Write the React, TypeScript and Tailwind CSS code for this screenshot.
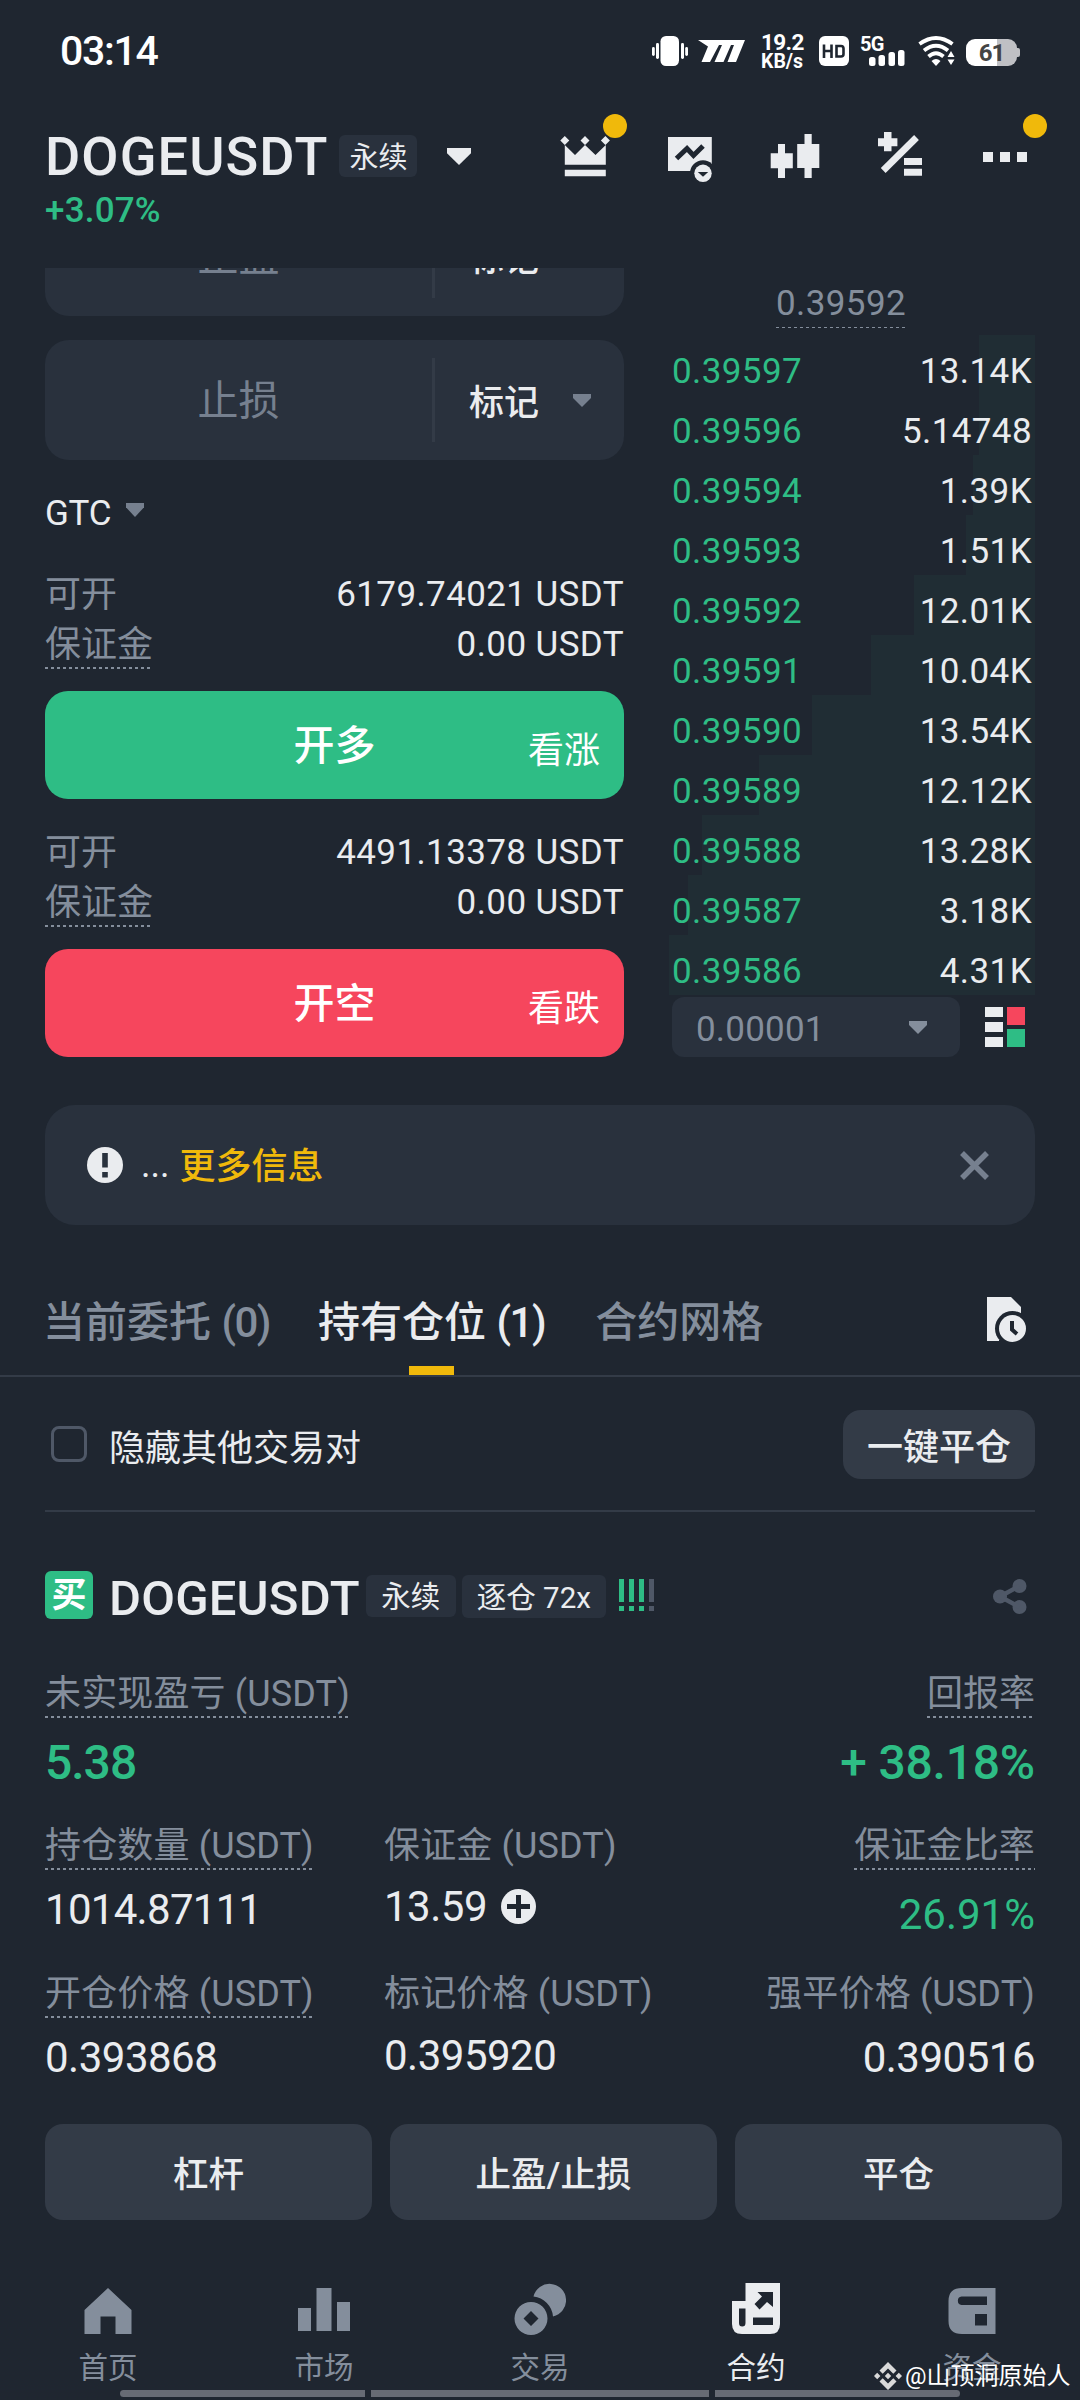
import React from "react";

interface Bid {
  price: string;
  amount: string;
  depth: number;
}

const bids: Bid[] = [
  { price: "0.39597", amount: "13.14K", depth: 56 },
  { price: "0.39596", amount: "5.14748", depth: 56 },
  { price: "0.39594", amount: "1.39K", depth: 62 },
  { price: "0.39593", amount: "1.51K", depth: 69 },
  { price: "0.39592", amount: "12.01K", depth: 121 },
  { price: "0.39591", amount: "10.04K", depth: 164 },
  { price: "0.39590", amount: "13.54K", depth: 223 },
  { price: "0.39589", amount: "12.12K", depth: 276 },
  { price: "0.39588", amount: "13.28K", depth: 333 },
  { price: "0.39587", amount: "3.18K", depth: 347 },
  { price: "0.39586", amount: "4.31K", depth: 366 },
];

const Arrow = ({ className }: { className: string }) => (
  <svg viewBox="0 0 18 13" preserveAspectRatio="none" className={className} fill="currentColor">
    <path d="M0 0H18V4L9 13L0 4Z" />
  </svg>
);

const Dashed = ({ children }: { children: React.ReactNode }) => (
  <span className="inline-block leading-[48px] bg-[linear-gradient(90deg,#848e9c_50%,transparent_50%)] bg-[length:6px_2px] bg-repeat-x bg-bottom-left">
    {children}
  </span>
);

const StatusBar = () => (
  <div className="flex items-center h-[101px] pl-[60px] pr-[60px] text-white">
    <span className="mt-[2px] text-[41px] font-medium tracking-[-1.3px] leading-none">03:14</span>
    <svg className="ml-auto" width="36" height="30" viewBox="0 0 36 30" fill="currentColor">
      <rect x="8.5" width="18.5" height="30" rx="5.5" />
      <rect x="0" y="11" width="2.8" height="9" rx="1.4" />
      <rect x="4" y="7" width="3" height="16" rx="1.4" />
      <rect x="29" y="7" width="3" height="16" rx="1.4" />
      <rect x="33.2" y="11" width="2.8" height="9" rx="1.4" />
    </svg>
    <svg className="ml-[10px]" width="47" height="22" viewBox="0 0 47 22" fill="currentColor">
      <path d="M0 0H47L38 22H29.500L36 5H33L25.500 22H16.500L24 5H21L12 22H3.500L10 6.500Z" />
    </svg>
    <div className="ml-[16px] mt-[3px] w-[44px] flex flex-col font-bold">
      <span className="text-[22.5px] leading-[19px] tracking-[-0.6px]">19.2</span>
      <span className="text-[19.5px] leading-[19px]">KB/s</span>
    </div>
    <svg className="ml-[14px]" width="30" height="30" viewBox="0 0 30 30" fill="none">
      <rect width="30" height="30" rx="6" fill="#fff" />
      <path d="M5 8.500V22M12.500 8.500V22M5 15H12.500" stroke="#1f2630" strokeWidth="2.600" />
      <path d="M17.500 10H22Q24.500 10 24.500 12.500V18Q24.500 20.500 22 20.500H17.500Z" stroke="#1f2630" strokeWidth="2.600" />
    </svg>
    <div className="ml-[11px] h-[30px] w-[45px] relative">
      <span className="block text-[20px] leading-[16px] font-bold tracking-[-0.8px]">5G</span>
      <svg className="absolute bottom-0 right-0" width="36" height="16" viewBox="0 0 36 16" fill="currentColor">
        <rect x="0" y="7" width="6.500" height="9" rx="2.500" />
        <rect x="9.500" y="5" width="6.500" height="11" rx="2.500" />
        <rect x="19.500" y="2" width="6.500" height="14" rx="2.500" />
        <rect x="29" y="0" width="6.500" height="16" rx="2.500" />
      </svg>
    </div>
    <svg className="ml-[13px]" width="37" height="30" viewBox="0 0 37 30" fill="none">
      <path d="M1.500 8Q18 -4 34.500 8" stroke="#fff" strokeWidth="3.800" />
      <path d="M6 14.500Q18 5 30 14.500" stroke="#fff" strokeWidth="3.800" />
      <path d="M10.500 20.500Q18 14 25.500 20.500" stroke="#fff" strokeWidth="3.800" />
      <path d="M13.500 25Q18 21 22.500 25L18 30Z" fill="#fff" />
      <path d="M33 15L36.500 21H29.500ZM33 29L29.500 23.500H36.500Z" fill="#fff" />
    </svg>
    <div className="ml-[11px] mt-[4px] flex items-center">
      <div className="w-[51px] h-[27px] rounded-[9px] bg-[linear-gradient(90deg,#fff_61%,#bfc0c4_61%)] text-[#444] text-[24px] font-bold leading-[29px] text-center tracking-[-1px]">
        61
      </div>
      <div className="w-[3px] h-[9px] bg-[#bfc0c4] rounded-r-[2px]" />
    </div>
  </div>
);

const Header = () => (
  <div className="h-[167px] px-[45px] pt-[27px]">
    <div className="flex items-center h-[56px] pr-[8px]">
      <h1 className="mt-[2px] text-[54px] font-medium tracking-[1.1px] leading-none">DOGEUSDT</h1>
      <span className="ml-[11px] w-[78px] h-[42px] rounded-[6px] bg-[#29313d] text-[29px] leading-[47px] text-center">
        永续
      </span>
      <Arrow className="ml-[30px] w-[24px] h-[17px]" />
      <div className="ml-auto relative">
        <svg width="50" height="42" viewBox="0 0 50 42" fill="currentColor">
          <path d="M4.800 10L15 20L25 10L35.500 20L45.800 10V29.700H4.800Z" />
          <path d="M4.800 34.700H45.800V41.300H4.800Z" />
          <path d="M4.800 1L9.300 5.500L4.800 10L0.300 5.500ZM25 1L29.500 5.500L25 10L20.500 5.500ZM45.400 1L49.900 5.500L45.400 10L40.900 5.500Z" />
        </svg>
        <i className="absolute left-[43px] top-[-21px] w-[24px] h-[24px] rounded-full bg-[#f0b90b]" />
      </div>
      <svg className="ml-[58px] mt-[6px]" width="44" height="45" viewBox="0 0 44 45" fill="currentColor">
        <path d="M0 0H43.800V34H0Z" />
        <path d="M8.500 21.500L19 11.500L25.500 18.500L35 9" stroke="#1f2630" strokeWidth="5" fill="none" />
        <circle cx="35" cy="36.300" r="13" fill="#1f2630" />
        <circle cx="35" cy="36.300" r="8.700" />
        <path d="M29.800 35H40.200L35 39.800Z" fill="#1f2630" />
      </svg>
      <svg className="ml-[58px]" width="50" height="44" viewBox="0 0 50 44" fill="currentColor">
        <path d="M8 10H15V19.300H22.800V34.300H15V44H8V34.300H0.700V19.300H8Z" />
        <path d="M34.500 0H41.700V10H49.300V34H41.700V44H34.500V34H27.200V10H34.500Z" />
      </svg>
      <svg className="ml-[58px] mt-[-4px]" width="44" height="44" viewBox="0 0 44 44" fill="currentColor">
        <path d="M6 0H13.500V6.300H19.400V14.300H13.500V19.300H6V14.300H0V6.300H6Z" />
        <path d="M5.200 38.500L38.500 5.500" stroke="currentColor" strokeWidth="6.800" />
        <path d="M26 26H44V33H26ZM26 36.700H44V43.700H26Z" />
      </svg>
      <div className="ml-[61px] mt-[2px] flex gap-[7px] relative">
        <i className="w-[10px] h-[10px] bg-current" />
        <i className="w-[10px] h-[10px] bg-current" />
        <i className="w-[10px] h-[10px] bg-current" />
        <i className="absolute left-[40px] top-[-38px] w-[24px] h-[24px] rounded-full bg-[#f0b90b]" />
      </div>
    </div>
    <p className="mt-[5px] leading-[44px] text-[35px] font-medium tracking-[0.2px] text-[#2ebd85]">+3.07%</p>
  </div>
);

const PriceInput = ({ label }: { label: string }) => (
  <div className="flex items-center shrink-0 w-full h-[120px] rounded-[24px] bg-[#29313d]">
    <span className="w-[387px] pt-[2px] text-center text-[41px] text-[#76808f] leading-none">{label}</span>
    <span className="w-[3px] h-[84px] bg-[#333b47]" />
    <span className="ml-[34px] mt-[7px] text-[35px] font-medium leading-none">标记</span>
    <Arrow className="ml-[34px] w-[18px] h-[13px] text-[#76808f]" />
  </div>
);

const OrderSide = ({ max, title, hint, color }: { max: string; title: string; hint: string; color: string }) => (
  <div className="text-[35px]">
    <div className="flex justify-between leading-[52px] h-[50px]">
      <span className="text-[36px] text-[#848e9c]">可开</span>
      <span className="tracking-[0.4px]">{max} USDT</span>
    </div>
    <div className="flex justify-between leading-[52px] h-[50px]">
      <span className="text-[36px] text-[#848e9c]">
        <Dashed>保证金</Dashed>
      </span>
      <span className="tracking-[0.4px]">0.00 USDT</span>
    </div>
    <button
      className={`relative mt-[22px] w-full h-[108px] pt-[4px] rounded-[23px] text-white text-[41px] font-medium ${color}`}
    >
      {title}
      <span className="absolute right-[24px] top-[30px] text-[36px] leading-[60px] font-normal">{hint}</span>
    </button>
  </div>
);

const OrderBook = () => (
  <div className="w-[366px] ml-[45px] flex flex-col text-[35px] tracking-[0.4px]">
    <div className="h-[67px] pt-[10px] pl-[107px]">
      <span className="inline-block h-[50px] leading-[52px] text-[#848e9c] bg-[linear-gradient(90deg,#848e9c_50%,transparent_50%)] bg-[length:6px_1px] bg-repeat-x bg-bottom-left">
        0.39592
      </span>
    </div>
    {bids.map((bid) => (
      <div key={bid.price} className="relative h-[60px]">
        <div className="absolute inset-y-0 right-0 bg-[#202d34]" style={{ width: bid.depth }} />
        <div className="relative flex justify-between pl-[3px] pr-[3px] pt-[12px] leading-[49px]">
          <span className="text-[#2ebd85]">{bid.price}</span>
          <span>{bid.amount}</span>
        </div>
      </div>
    ))}
    <div className="flex items-center mt-[2px] pl-[3px]">
      <div className="flex items-center justify-between w-[288px] h-[60px] rounded-[12px] bg-[#29313d] pl-[24px] pr-[33px] text-[#848e9c]">
        <span className="leading-[60px] pt-[5px] tracking-[0.2px]">0.00001</span>
        <Arrow className="w-[18px] h-[13px]" />
      </div>
      <svg className="ml-[25px]" width="40" height="40" viewBox="0 0 40 40">
        <path d="M0 0H18V10H0ZM0 15H18V25H0ZM0 30H18V40H0Z" fill="#eaecef" />
        <path d="M22 0H40V18H22Z" fill="#f6465d" />
        <path d="M22 22H40V40H22Z" fill="#2ebd85" />
      </svg>
    </div>
  </div>
);

const Tabs = () => (
  <div className="flex h-[152px] border-b-2 border-[#333b47] pl-[43px] pr-[54px] pt-[72px] text-[42px] font-medium leading-[52px] text-[#848e9c]">
    <span>
      当前委托 <span className="tracking-[-1.5px]">(0)</span>
    </span>
    <div className="ml-[48px] flex flex-col items-center text-[#eaecef]">
      <span>
        持有仓位 <span className="tracking-[-1.5px]">(1)</span>
      </span>
      <i className="mt-[17px] w-[45px] h-[9px] bg-[#f0b90b]" />
    </div>
    <span className="ml-[50px]">合约网格</span>
    <svg className="ml-auto" width="39" height="46" viewBox="0 0 39 46" fill="#eaecef">
      <path d="M0 0H24L34 10V44H0Z" />
      <circle cx="25.500" cy="31.500" r="17.500" fill="#1f2630" />
      <path d="M12 43H38V46H12Z" fill="#1f2630" />
      <circle cx="25.500" cy="31.500" r="13.500" />
      <path d="M25 24V32.500L30 37" stroke="#1f2630" strokeWidth="4" fill="none" />
    </svg>
  </div>
);

const Position = () => (
  <div className="px-[45px] text-[36px]">
    <div className="flex items-center h-[60px] mt-[54px]">
      <span className="mt-[-2px] w-[48px] h-[48px] rounded-[6px] bg-[#2ebd85] text-white text-[35px] font-bold text-center leading-[50px]">
        买
      </span>
      <h2 className="ml-[16px] mt-[5px] text-[49px] font-medium tracking-[0.2px] leading-none">DOGEUSDT</h2>
      <span className="ml-[6px] w-[90px] h-[42px] rounded-[6px] bg-[#29313d] text-[29.5px] text-center leading-[45px]">永续</span>
      <span className="ml-[6px] w-[144px] h-[43px] rounded-[6px] bg-[#29313d] text-[29.5px] text-center leading-[46px]">
        逐仓 72x
      </span>
      <svg className="ml-[13px] mt-[-2px]" width="35" height="32" viewBox="0 0 35 32">
        <path d="M0 0H5V23H0ZM10 0H15V23H10ZM20 0H25V23H20ZM0 27H5V32H0ZM10 27H15V32H10ZM20 27H25V32H20Z" fill="#2ebd85" />
        <path d="M30 0H35V23H30ZM30 27H35V32H30Z" fill="#4f5867" />
      </svg>
      <svg className="ml-auto mr-[8px]" width="34" height="35" viewBox="0 0 34 35" fill="#4f5867">
        <circle cx="26.500" cy="7" r="7" />
        <circle cx="26.500" cy="28" r="7" />
        <circle cx="7" cy="17.500" r="7" />
        <path d="M26.500 7L7 17.500L26.500 28" fill="none" stroke="#4f5867" strokeWidth="4.500" />
      </svg>
    </div>

    <div className="flex justify-between mt-[44px] h-[48px] leading-[48px] text-[#848e9c]">
      <span className="tracking-[0.15px]">
        <Dashed>未实现盈亏 (USDT)</Dashed>
      </span>
      <Dashed>回报率</Dashed>
    </div>
    <div className="flex justify-between mt-[15px] leading-[60px] text-[48px] font-medium text-[#2ebd85]">
      <span className="tracking-[-1px]">5.38</span>
      <span className="tracking-[-0.2px]">+ 38.18%</span>
    </div>

    <div className="grid grid-cols-[339px_1fr_auto] mt-[29px] h-[48px] leading-[48px] text-[#848e9c] tracking-[0.15px]">
      <span>
        <Dashed>持仓数量 (USDT)</Dashed>
      </span>
      <span>保证金 (USDT)</span>
      <Dashed>保证金比率</Dashed>
    </div>
    <div className="grid grid-cols-[339px_1fr_auto] mt-[13px] h-[52px] leading-[54px] text-[42px] tracking-[-0.5px]">
      <span className="tracking-[-0.7px]">1014.87111</span>
      <span className="flex items-center h-[48px]">
        13.59
        <svg className="ml-[14px] mb-[2px]" width="35" height="35" viewBox="0 0 35 35">
          <circle cx="17.500" cy="17.500" r="17.500" fill="#eaecef" />
          <path d="M17.500 6V29M6 17.500H29" stroke="#1f2630" strokeWidth="5" />
        </svg>
      </span>
      <span className="pt-[5px] tracking-[0px] text-[#2ebd85]">26.91%</span>
    </div>

    <div className="grid grid-cols-[339px_1fr_auto] mt-[35px] h-[48px] leading-[48px] text-[#848e9c] tracking-[0.15px]">
      <span>
        <Dashed>开仓价格 (USDT)</Dashed>
      </span>
      <span>标记价格 (USDT)</span>
      <span>强平价格 (USDT)</span>
    </div>
    <div className="grid grid-cols-[339px_1fr_auto] mt-[13px] h-[52px] leading-[54px] text-[42px] tracking-[-0.5px]">
      <span>0.393868</span>
      <span className="leading-[49px]">0.395920</span>
      <span>0.390516</span>
    </div>

    <div className="flex gap-[18px] mt-[41px] font-medium text-[35.5px]">
      {["杠杆", "止盈/止损", "平仓"].map((name) => (
        <button key={name} className="shrink-0 w-[327px] h-[96px] pt-[7px] rounded-[18px] bg-[#333b47]">
          {name}
        </button>
      ))}
    </div>
  </div>
);

const navItems = [
  {
    name: "首页",
    icon: <path d="M26 6L49.500 28V52H33.500V34.500H18.500V52H2.500V28Z" />,
  },
  {
    name: "市场",
    icon: <path d="M0 26H13V49H0ZM18.500 6H33.500V49H18.500ZM39 20H52V49H39Z" />,
  },
  {
    name: "交易",
    icon: (
      <>
        <path d="M19.500 14.500A16.500 16.500 0 1 1 39 34.500A22 22 0 0 0 19.500 14.500Z" />
        <path fillRule="evenodd" d="M17 20A16.500 16.500 0 1 0 17 53A16.500 16.500 0 1 0 17 20ZM17 29L24.500 36.500L17 44L9.500 36.500Z" />
      </>
    ),
  },
  {
    name: "合约",
    icon: (
      <path
        fillRule="evenodd"
        d="M15.500 1H50V42Q50 52 40 52H12Q2 52 2 42V19H15.500ZM9 26.500V41Q9 44.500 12.200 44.500Q15.500 44.500 15.500 41V26.500ZM23 35.500V43H43V35.500ZM27.500 10L32 14.500L24.500 22L29.500 27.500L37 20L43 25V10Z"
      />
    ),
  },
  {
    name: "资金",
    icon: (
      <path
        fillRule="evenodd"
        d="M16 6H49.500V52H16Q2.500 52 2.500 39V19Q2.500 6 16 6ZM15.500 14.500A4.300 4.300 0 0 0 15.500 23H41V14.500ZM29 32V43.500H41V32Z"
      />
    ),
  },
];

const BottomNav = () => (
  <div className="flex h-[180px] pt-[62px] text-[29.5px]">
    {navItems.map((item) => (
      <div
        key={item.name}
        className={`w-[216px] flex flex-col items-center ${item.name === "合约" ? "text-[#eaecef]" : "text-[#848e9c]"}`}
      >
        <svg width="52" height="54" viewBox="0 0 52 54" fill="currentColor">
          {item.icon}
        </svg>
        <span className="mt-[12px] leading-[40px]">{item.name}</span>
      </div>
    ))}
  </div>
);

const App = () => {
  return (
    <div className="relative w-[1080px] h-[2400px] overflow-hidden bg-[#1f2630] text-[#eaecef] font-['Roboto','Noto_Sans_CJK_SC',sans-serif]">
      <StatusBar />
      <Header />

      <div className="flex pl-[45px] h-[789px]">
        <div className="w-[579px]">
          <div className="flex items-end h-[48px] overflow-hidden">
            <PriceInput label="止盈" />
          </div>
          <div className="mt-[24px]">
            <PriceInput label="止损" />
          </div>
          <div className="flex items-center mt-[33px] mb-[34px] h-[42px] text-[35px] tracking-[-0.3px]">
            <span>GTC</span>
            <Arrow className="ml-[15px] mb-[9px] w-[18px] h-[14px] text-[#76808f]" />
          </div>
          <OrderSide max="6179.74021" title="开多" hint="看涨" color="bg-[#2ebd85]" />
          <div className="h-[28px]" />
          <OrderSide max="4491.13378" title="开空" hint="看跌" color="bg-[#f6465d]" />
        </div>
        <OrderBook />
      </div>

      <div className="flex items-center mt-[48px] mx-[45px] h-[120px] pl-[42px] pr-[46px] rounded-[30px] bg-[#29313d] text-[36px]">
        <svg width="36" height="36" viewBox="0 0 36 36">
          <circle cx="18" cy="18" r="18" fill="#eaecef" />
          <path d="M15.200 6H20.800V20.500H15.200ZM15.200 25H20.800V30.500H15.200Z" fill="#29313d" />
        </svg>
        <span className="ml-[18px]">...</span>
        <span className="ml-[10px] mt-[3px] font-medium text-[#f0b90b]">更多信息</span>
        <svg className="ml-auto" width="29" height="29" viewBox="0 0 29 29">
          <path d="M2 2L27 27M27 2L2 27" stroke="#76808f" strokeWidth="5.500" />
        </svg>
      </div>

      <Tabs />

      <div className="flex items-center mx-[45px] h-[135px] border-b-2 border-[#333b47] text-[36px]">
        <span className="ml-[6px] w-[36px] h-[36px] rounded-[8px] border-[3px] border-[#4f5867]" />
        <span className="ml-[22px] mt-[10px]">隐藏其他交易对</span>
        <button className="ml-auto mt-[2px] w-[192px] h-[69px] pt-[7px] rounded-[18px] bg-[#333b47] font-medium">一键平仓</button>
      </div>

      <Position />
      <BottomNav />

      <div className="absolute left-[120px] bottom-[3px] flex gap-[6px] w-[840px] h-[7px] rounded-full overflow-hidden">
        <i className="w-[245px] bg-[#676b74]" />
        <i className="flex-1 bg-[#676b74]" />
        <i className="w-[245px] bg-[#676b74]" />
      </div>

      <div className="absolute left-[874px] top-[2362px] flex items-center h-[28px] text-[24px] text-white">
        <svg width="28" height="28" viewBox="0 0 28 28" fill="#d9d9d9">
          <path d="M14 0L22.500 8.500L19.300 11.700L14 6.400L8.700 11.700L5.500 8.500Z" />
          <path d="M14 28L5.500 19.500L8.700 16.300L14 21.600L19.300 16.300L22.500 19.500Z" />
          <path d="M14 10.800L17.200 14L14 17.200L10.800 14ZM3.200 10.800L6.400 14L3.200 17.200L0 14ZM24.800 10.800L28 14L24.800 17.200L21.600 14Z" />
        </svg>
        <span className="ml-[3px] whitespace-nowrap">@山顶洞原始人</span>
      </div>
    </div>
  );
};

export default App;
